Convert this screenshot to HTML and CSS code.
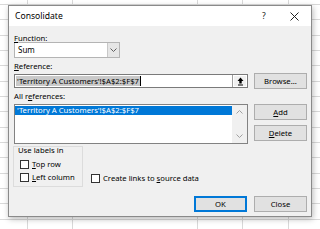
FILE: index.html
```html
<!DOCTYPE html>
<html>
<head>
<meta charset="utf-8">
<link rel="stylesheet" href="styles.css">
</head>
<body>
<div class="dialog">
  <div class="titlebar">
    <span class="title">Consolidate</span>
    <span class="help">?</span>
    <span class="close-x"><svg width="9" height="9" viewBox="0 0 9 9"><path d="M0.5 0.5 L8.5 8.5 M8.5 0.5 L0.5 8.5" stroke="#222" stroke-width="1"/></svg></span>
  </div>
  <div class="content">
    <div class="label lbl-function"><u>F</u>unction:</div>
    <div class="combo">
      <span class="combo-text">Sum</span>
      <span class="combo-btn"><svg width="7" height="4" viewBox="0 0 7 4"><path d="M0.5 0.5 L3.5 3.5 L6.5 0.5" fill="none" stroke="#606060" stroke-width="1"/></svg></span>
    </div>
    <div class="label lbl-ref"><u>R</u>eference:</div>
    <div class="row ref-row">
      <div class="ref-input">
        <span class="ref-text"><span class="sel">'Territory A Customers'!$A$2:$F$7</span><span class="caret"></span></span>
        <span class="collapse-btn"><svg width="7" height="9" viewBox="0 0 7 9"><path d="M3.5 0.5 L0.5 4 L2.3 4 L2.3 6.5 L4.7 6.5 L4.7 4 L6.5 4 Z" fill="#000"/><rect x="1" y="7.5" width="5" height="1" fill="#000"/></svg></span>
      </div>
      <div class="btn">Browse...</div>
    </div>
    <div class="label lbl-all">All r<u>e</u>ferences:</div>
    <div class="row list-row">
      <div class="list">
        <div class="list-items">
          <div class="item selected">'Territory A Customers'!$A$2:$F$7</div>
        </div>
        <div class="scrollbar">
          <svg width="7" height="4" viewBox="0 0 7 4"><path d="M0.5 3.5 L3.5 0.5 L6.5 3.5" fill="none" stroke="#a0a0a0" stroke-width="1"/></svg>
          <svg width="7" height="4" viewBox="0 0 7 4"><path d="M0.5 0.5 L3.5 3.5 L6.5 0.5" fill="none" stroke="#a0a0a0" stroke-width="1"/></svg>
        </div>
      </div>
      <div class="btn-col">
        <div class="btn"><u>A</u>dd</div>
        <div class="btn"><u>D</u>elete</div>
      </div>
    </div>
    <div class="row options-row">
      <div class="group">
        <div class="group-label">Use labels in</div>
        <label class="check check-top"><span class="box"></span><span><u>T</u>op row</span></label>
        <label class="check"><span class="box"></span><span><u>L</u>eft column</span></label>
      </div>
      <label class="check check-links"><span class="box"></span><span>Create links to <u>s</u>ource data</span></label>
    </div>
    <div class="row footer">
      <div class="btn btn-default">OK</div>
      <div class="btn">Close</div>
    </div>
  </div>
</div>
</body>
</html>
```

FILE: styles.css
```css
html, body {
  margin: 0;
  padding: 0;
}
body {
  width: 320px;
  height: 229px;
  overflow: hidden;
  box-sizing: border-box;
  padding: 5px 0 0 8px;
  font-family: "Noto Sans", "Liberation Sans", sans-serif;
  font-size: 7.7px;
  color: #000;
  background-color: #fff;
  background-image:
    linear-gradient(#d9d9d9, #d9d9d9),
    linear-gradient(#d9d9d9, #d9d9d9),
    linear-gradient(#d9d9d9, #d9d9d9),
    linear-gradient(#d9d9d9, #d9d9d9),
    linear-gradient(#d9d9d9, #d9d9d9),
    repeating-linear-gradient(to bottom, transparent 0, transparent 4px, #d9d9d9 4px, #d9d9d9 5px, transparent 5px, transparent 15.33px);
  background-size: 1px 100%, 1px 100%, 1px 100%, 1px 100%, 1px 100%, 100% 100%;
  background-position: 27px 0, 72px 0, 197px 0, 242px 0, 288px 0, 0 0;
  background-repeat: no-repeat;
}
u {
  text-decoration: underline;
  text-underline-offset: 1px;
}
.dialog {
  width: 304px;
  height: 212px;
  box-sizing: border-box;
  background: #f0f0f0;
  border: 1px solid #8a8a8a;
  box-shadow: 1px 2px 6px rgba(0, 0, 0, 0.28);
}
.titlebar {
  height: 20px;
  background: #fff;
  display: flex;
  align-items: center;
  padding-left: 6px;
}
.title {
  font-size: 8.6px;
  flex: 1;
}
.help {
  font-size: 8.6px;
  width: 10px;
  margin-right: 18px;
  color: #222;
}
.close-x {
  display: flex;
  margin-right: 12px;
}
.content {
  padding: 0 4px 0 5px;
}
.label {
  height: 8px;
  line-height: 8px;
}
.lbl-function {
  margin-top: 8px;
}
.lbl-ref {
  margin-top: 4px;
}
.lbl-all {
  margin-top: 3px;
}
.combo {
  margin-top: 0;
  width: 106px;
  height: 16px;
  box-sizing: border-box;
  border: 1px solid #b4b4b4;
  background: #fff;
  display: flex;
}
.combo-text {
  flex: 1;
  padding-left: 3px;
  line-height: 14px;
  font-size: 8px;
}
.combo-btn {
  width: 11px;
  background: #e6e6e6;
  border-left: 1px solid #c8c8c8;
  display: flex;
  align-items: center;
  justify-content: center;
}
.row {
  display: flex;
}
.ref-row {
  margin-top: 3px;
  align-items: center;
  height: 16px;
}
.ref-input {
  width: 234px;
  height: 14px;
  box-sizing: border-box;
  border: 1px solid #7a7a7a;
  background: #fff;
  display: flex;
}
.ref-text {
  flex: 1;
  padding-left: 1px;
  line-height: 12px;
  display: flex;
  align-items: center;
}
.sel {
  background: #c9c9c9;
  line-height: 10px;
  padding: 0 1px;
}
.caret {
  width: 1px;
  height: 10px;
  background: #000;
}
.collapse-btn {
  width: 14px;
  border-left: 1px solid #a0a0a0;
  background: #f0f0f0;
  display: flex;
  align-items: center;
  justify-content: center;
  box-shadow: inset 0 0 0 1px #fff;
}
.btn {
  width: 53px;
  height: 16px;
  box-sizing: border-box;
  border: 1px solid #adadad;
  background: #e1e1e1;
  display: flex;
  align-items: center;
  justify-content: center;
}
.ref-row .btn {
  margin-left: 6px;
}
.list-row {
  margin-top: 4px;
}
.list {
  width: 234px;
  height: 40px;
  box-sizing: border-box;
  border: 1px solid #828282;
  background: #fff;
  display: flex;
}
.list-items {
  flex: 1;
  padding: 1px 0 0 0;
}
.item {
  height: 9px;
  line-height: 9px;
  padding-left: 2px;
}
.item.selected {
  background: #0078d7;
  color: #fff;
}
.scrollbar {
  width: 15px;
  background: #f0f0f0;
  display: flex;
  flex-direction: column;
  justify-content: space-between;
  align-items: center;
  padding: 5px 0 5px;
}
.btn-col {
  margin-left: 6px;
  display: flex;
  flex-direction: column;
  gap: 5px;
}
.options-row {
  margin-top: 2px;
  align-items: flex-end;
}
.group {
  margin-left: -1px;
  width: 70px;
  height: 41px;
  box-sizing: border-box;
  border: 1px solid #dcdcdc;
  padding: 0 0 0 6px;
}
.group-label {
  margin-left: -2px;
  height: 8px;
  line-height: 8px;
  margin-top: -1px;
  margin-bottom: 6px;
}
.check {
  display: flex;
  align-items: center;
  gap: 3px;
  height: 9px;
  line-height: 9px;
}
.check-top {
  margin-bottom: 4px;
}
.box {
  width: 9px;
  height: 9px;
  box-sizing: border-box;
  border: 1px solid #333;
  background: #fff;
}
.check-links {
  margin-left: 8px;
  margin-bottom: 4px;
}
.footer {
  margin-top: 9px;
  justify-content: flex-end;
  gap: 7px;
  padding-right: 0;
}
.btn-default {
  border: 1px solid #0078d7;
  box-shadow: inset 0 0 0 1px #0078d7;
}
```
